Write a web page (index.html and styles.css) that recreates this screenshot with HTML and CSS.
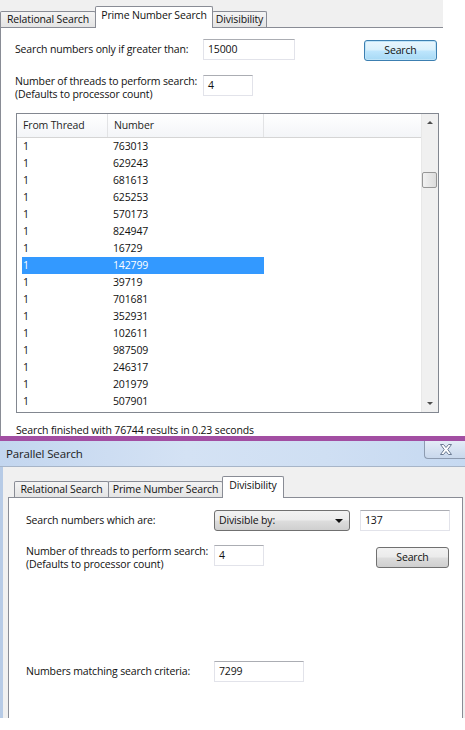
FILE: index.html
```html
<!DOCTYPE html>
<html>
<head>
<meta charset="utf-8">
<link rel="stylesheet" href="styles.css">
</head>
<body>
<div class="top">
  <div class="tabstrip t1">
    <div class="tab w1">Relational Search</div>
    <div class="tab sel w2">Prime Number Search</div>
    <div class="tab w3">Divisibility</div>
  </div>
  <div class="panel p1">
    <div class="row r1">
      <div class="label">Search numbers only if greater than:</div>
      <div class="input in-a">15000</div>
      <div class="spacer"></div>
      <div class="btn btn-focus">Search</div>
    </div>
    <div class="row r2">
      <div class="label two">Number of threads to perform search:<br>(Defaults to processor count)</div>
      <div class="input in-b">4</div>
    </div>
    <div class="listview">
      <div class="lv-main">
        <div class="lv-head">
          <div class="hc c1">From Thread</div>
          <div class="hc c2">Number</div>
          <div class="hc c3"></div>
        </div>
        <div class="lv-rows">
          <div class="lv-row"><span class="rc1">1</span><span>763013</span></div>
          <div class="lv-row"><span class="rc1">1</span><span>629243</span></div>
          <div class="lv-row"><span class="rc1">1</span><span>681613</span></div>
          <div class="lv-row"><span class="rc1">1</span><span>625253</span></div>
          <div class="lv-row"><span class="rc1">1</span><span>570173</span></div>
          <div class="lv-row"><span class="rc1">1</span><span>824947</span></div>
          <div class="lv-row"><span class="rc1">1</span><span>16729</span></div>
          <div class="lv-row selected"><span class="rc1">1</span><span>142799</span></div>
          <div class="lv-row"><span class="rc1">1</span><span>39719</span></div>
          <div class="lv-row"><span class="rc1">1</span><span>701681</span></div>
          <div class="lv-row"><span class="rc1">1</span><span>352931</span></div>
          <div class="lv-row"><span class="rc1">1</span><span>102611</span></div>
          <div class="lv-row"><span class="rc1">1</span><span>987509</span></div>
          <div class="lv-row"><span class="rc1">1</span><span>246317</span></div>
          <div class="lv-row"><span class="rc1">1</span><span>201979</span></div>
          <div class="lv-row"><span class="rc1">1</span><span>507901</span></div>
        </div>
      </div>
      <div class="scrollbar">
        <div class="arrow up"></div>
        <div class="track-a"></div>
        <div class="thumb"></div>
        <div class="track-b"></div>
        <div class="arrow down"></div>
      </div>
    </div>
    <div class="status">Search finished with 76744 results in 0.23 seconds</div>
  </div>
</div>
<div class="divider"></div>
<div class="win2">
  <div class="titlebar">
    <div class="title">Parallel Search</div>
    <div class="closebtn">
      <svg width="16" height="13" viewBox="0 0 16 13">
        <path d="M2.5 1.5 L5.5 1.5 L8 4.5 L10.5 1.5 L13.5 1.5 L9.8 6.5 L13.5 11.5 L10.5 11.5 L8 8.5 L5.5 11.5 L2.5 11.5 L6.2 6.5 Z" fill="#ffffff" stroke="#6b7b93" stroke-width="1" stroke-linejoin="round"/>
      </svg>
    </div>
  </div>
  <div class="body2">
    <div class="tabstrip t2">
      <div class="tab w4">Relational Search</div>
      <div class="tab w5">Prime Number Search</div>
      <div class="tab sel w6">Divisibility</div>
    </div>
    <div class="panel p2">
      <div class="row s1">
        <div class="label">Search numbers which are:</div>
        <div class="combo"><span>Divisible by:</span><span class="caret"></span></div>
        <div class="input in-c">137</div>
      </div>
      <div class="row s2">
        <div class="label two">Number of threads to perform search:<br>(Defaults to processor count)</div>
        <div class="input in-b">4</div>
        <div class="spacer"></div>
        <div class="btn btn-plain">Search</div>
      </div>
      <div class="row s3">
        <div class="label">Numbers matching search criteria:</div>
        <div class="input in-d">7299</div>
      </div>
    </div>
  </div>
</div>
</body>
</html>
```
FILE: styles.css
```css
* { box-sizing: border-box; }
html, body { margin: 0; padding: 0; }
body {
  width: 465px;
  height: 730px;
  overflow: hidden;
  background: #ffffff;
  font-family: "Open Sans", "Noto Sans", sans-serif;
  font-size: 10.5px;
  letter-spacing: -0.15px;
  color: #111;
}

/* ---------- top window ---------- */
.top {
  height: 436px;
  width: 443px;
  overflow: hidden;
  display: flex;
  flex-direction: column;
}
.tabstrip {
  flex: none;
  display: flex;
  align-items: flex-end;
  background: #f0f0f0;
  border-bottom: 1px solid #898c95;
}
.t1 { height: 28px; }
.tab {
  flex: none;
  height: 16px;
  border: 1px solid #898c95;
  border-bottom: none;
  background: linear-gradient(#f4f4f4, #e4e4e4);
  line-height: 14px;
  text-align: center;
  margin-right: -1px;
  white-space: nowrap;
  border-radius: 2px 2px 0 0;
}
.tab.sel {
  height: 22px;
  background: #ffffff;
  margin-bottom: -1px;
  line-height: 17px;
}
.w1 { width: 96px; }
.w2 { width: 118px; }
.w3 { width: 55px; }

.panel { background: #ffffff; border-left: 1px solid #898c95; }
.p1 {
  flex: 1;
  padding: 11px 6px 0 14px;
  display: flex;
  flex-direction: column;
}
.row { display: flex; align-items: flex-start; flex: none; }
.label { flex: none; width: 188px; padding-top: 3px; white-space: nowrap; line-height: 14px; }
.label.two { line-height: 13px; padding-top: 0; }
.spacer { flex: 1; }
.input {
  flex: none;
  height: 21px;
  border: 1px solid #e2e3ea;
  border-top-color: #abadb3;
  background: #fff;
  padding: 0 4px;
  line-height: 19px;
}
.in-a { width: 92px; }
.in-b { width: 50px; }
.in-c { width: 90px; margin-left: 10px; }
.in-d { width: 90px; }
.r2 { margin-top: 14px; }

.btn {
  flex: none;
  width: 73px;
  height: 21px;
  border: 1px solid #707070;
  border-radius: 3px;
  text-align: center;
  line-height: 19px;
  background: linear-gradient(#f2f2f2 0%, #ebebeb 48%, #dddddd 52%, #cfcfcf 100%);
}
.btn-focus {
  margin-top: 1px;
  border-color: #3c7fb1;
  box-shadow: inset 0 0 0 1px #bfe4f8;
  background: linear-gradient(#eaf6fd 0%, #d9f0fc 48%, #bee6fd 52%, #a7d9f5 100%);
}

.listview {
  flex: none;
  margin-top: 12px;
  margin-left: 1px;
  width: 423px;
  height: 300px;
  border: 1px solid #828790;
  display: flex;
  background: #fff;
}
.lv-main { flex: 1; overflow: hidden; }
.lv-head {
  height: 24px;
  display: flex;
  background: linear-gradient(#ffffff, #f3f5f8);
  border-bottom: 1px solid #d5d5d5;
  color: #1e1e1e;
  line-height: 22px;
}
.hc { white-space: nowrap; }
.c1 { width: 90px; padding-left: 6px; }
.c2 { width: 157px; padding-left: 6px; border-left: 1px solid #e2e3e5; border-right: 1px solid #e2e3e5; }
.c3 { flex: 1; }
.lv-rows { padding-left: 5px; }
.lv-row {
  display: flex;
  width: 242px;
  height: 17px;
  line-height: 17px;
}
.rc1 { width: 91px; padding-left: 1px; }
.lv-row.selected { background: #3399ff; color: #fff; }

.scrollbar {
  width: 17px;
  display: flex;
  flex-direction: column;
  background: #f0f0f0;
  border-left: 1px solid #e8e8e8;
}
.arrow { height: 17px; position: relative; flex: none; }
.arrow::after {
  content: "";
  position: absolute;
  left: 5px;
  width: 0; height: 0;
  border-left: 3px solid transparent;
  border-right: 3px solid transparent;
}
.arrow.up::after { top: 7px; border-bottom: 3px solid #4d4d4d; }
.arrow.down::after { top: 7px; border-top: 3px solid #4d4d4d; }
.track-a { height: 41px; flex: none; }
.thumb {
  flex: none;
  height: 16px;
  margin: 0 1px 0 0;
  border: 1px solid #979797;
  border-radius: 2px;
  background: linear-gradient(90deg, #f2f2f2, #dcdcdc);
}
.track-b { flex: 1; }

.status { flex: none; margin-top: 10px; margin-left: 1px; white-space: nowrap; line-height: 14px; }

.divider { height: 5px; background: #a24ea2; }

/* ---------- bottom window ---------- */
.win2 { height: 277px; display: flex; flex-direction: column; }
.titlebar {
  flex: none;
  height: 26px;
  display: flex;
  align-items: flex-start;
  background: linear-gradient(90deg, #c3d6ef 0%, #d4e2f4 40%, #cfdff3 70%, #c6d9f1 100%);
  border-bottom: 1px solid #a7b5c8;
}
.title { flex: 1; padding: 5px 0 0 6px; font-size: 11.5px; line-height: 16px; color: #1c1c1c; }
.closebtn {
  width: 42px;
  height: 18px;
  border: 1px solid #8d9bb0;
  border-top: none;
  border-right: none;
  border-radius: 0 0 0 4px;
  background: linear-gradient(#e4ecf7, #c9d8ec);
  display: flex;
  align-items: center;
  justify-content: center;
  margin-right: -1px;
}
.body2 {
  flex: 1;
  background: #f0f0f0;
  border-left: 3px solid #b7cbe6;
  padding-left: 5px;
  padding-right: 2px;
  display: flex;
  flex-direction: column;
}
.t2 { height: 31px; padding-left: 6px; }
.w4 { width: 95px; }
.w5 { width: 115px; }
.w6 { width: 62px; }
.p2 {
  flex: 1;
  border-right: 1px solid #898c95;
  padding: 12px 0 0 17px;
}
.s1 { padding-right: 10px; }
.combo {
  flex: none;
  width: 136px;
  height: 21px;
  border: 1px solid #707070;
  border-radius: 3px;
  background: linear-gradient(#f2f2f2 0%, #ebebeb 48%, #dddddd 52%, #cfcfcf 100%);
  padding: 0 4px;
  line-height: 19px;
  display: flex;
  align-items: center;
  justify-content: space-between;
}
.caret {
  width: 0; height: 0;
  border-left: 4px solid transparent;
  border-right: 4px solid transparent;
  border-top: 4px solid #111;
  margin-right: 2px;
}
.s2 { margin-top: 14px; padding-right: 13px; }
.s2 .btn { margin-top: 2px; }
.s3 { margin-top: 90px; }
```
